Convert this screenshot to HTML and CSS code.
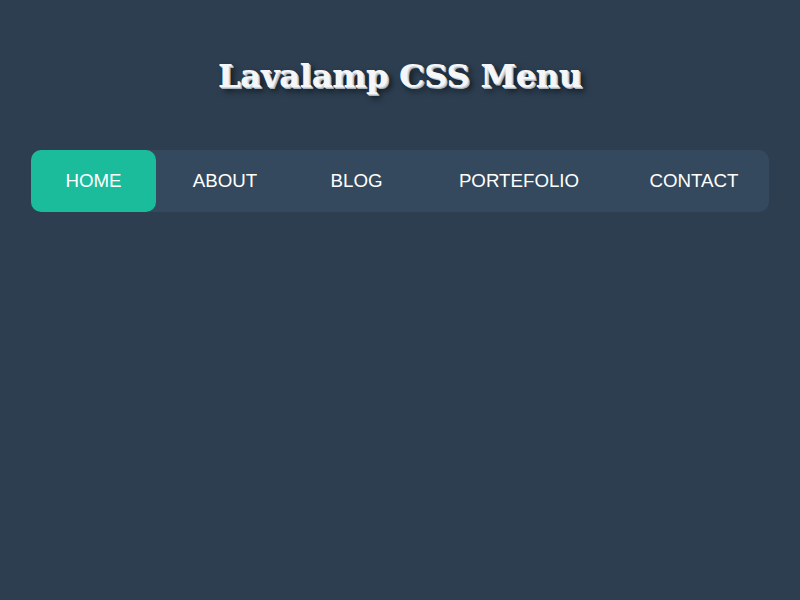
FILE: index.html
```html
<!DOCTYPE html>
<html lang="en">

<head>
  <meta charset="UTF-8" />
  <title>Lavalamp CSS Menu</title>
  <link rel="stylesheet" href="styles.css">
</head>

<body>
  <h1>Lavalamp CSS Menu</h1>
  <nav class="menu">
    <a href="#" class="item-home active">HOME</a>
    <a href="#" class="item-about">ABOUT</a>
    <a href="#" class="item-blog">BLOG</a>
    <a href="#" class="item-portfolio">PORTEFOLIO</a>
    <a href="#" class="item-contact">CONTACT</a>
  </nav>
</body>

</html>
```

FILE: styles.css
```css
body {
  font-family: "Liberation Sans", Arial, sans-serif;
  background-color: #2c3e50;
  margin: 0;
  padding: 56px 31px 0;
}

h1 {
  font-family: "DejaVu Serif", serif;
  font-size: 32px;
  letter-spacing: -0.2px;
  line-height: 40px;
  font-weight: bold;
  text-align: center;
  color: #f4f6f8;
  margin: 0 0 54px;
  text-shadow: 1px 1px 0 #d5dae0, 2px 2px 0 #aab3bc, 4px 4px 6px rgba(0, 0, 0, 0.7);
}

.menu {
  display: flex;
  height: 62px;
  background-color: #34495e;
  border-radius: 10px;
}

.menu a {
  display: flex;
  justify-content: center;
  align-items: center;
  color: #fff;
  font-size: 18.72px;
  text-decoration: none;
  border-radius: 10px;
}

.menu .active {
  background-color: #1abc9c;
}

.item-home {
  width: 125px;
}

.item-about {
  width: 138px;
}

.item-blog {
  width: 125px;
}

.item-portfolio {
  width: 200px;
}

.item-contact {
  width: 150px;
}
```
